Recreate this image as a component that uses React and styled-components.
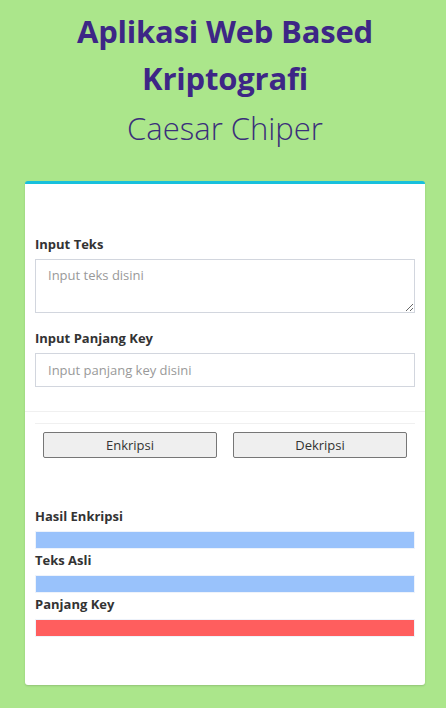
import React from "react";
import styled, { createGlobalStyle } from "styled-components";

const GlobalStyle = createGlobalStyle`
  html, body {
    margin: 0;
    padding: 0;
    background: #abe68b;
  }
  body {
    font-family: "Open Sans", "Noto Sans", sans-serif;
  }
`;

const Page = styled.div`
  width: 446px;
  min-height: 708px;
  background: #abe68b;
  padding: 8px 21px 0 25px;
  box-sizing: border-box;
`;

const Title = styled.h1`
  margin: 0;
  text-align: center;
  font-size: 31px;
  line-height: 47px;
  font-weight: 700;
  color: #3d2686;
  letter-spacing: -0.2px;
`;

const Subtitle = styled.h2`
  margin: 0;
  text-align: center;
  font-size: 31px;
  line-height: 52px;
  font-weight: 300;
  color: #3a2f7a;
`;

const Card = styled.div`
  margin-top: 27px;
  background: #fff;
  border-top: 3px solid #17c0dc;
  border-radius: 3px;
  box-shadow: 0 1px 2px rgba(0, 0, 0, 0.15);
  padding-bottom: 46px;
`;

const Body = styled.div`
  padding: 51px 10px 24px;
  border-bottom: 1px solid #f0f0f0;
`;

const Label = styled.label`
  display: block;
  font-size: 13px;
  line-height: 18px;
  font-weight: 700;
  color: #333;
  margin: ${(p) => p.$top || 0}px 0 6px;
`;

const TextArea = styled.textarea`
  display: block;
  width: 100%;
  height: 54px;
  box-sizing: border-box;
  border: 1px solid #d2d6de;
  padding: 6px 12px;
  font-family: inherit;
  font-size: 13px;
  resize: vertical;
  outline: none;
  &::placeholder {
    color: #999;
  }
`;

const Input = styled.input`
  display: block;
  width: 100%;
  height: 34px;
  box-sizing: border-box;
  border: 1px solid #d2d6de;
  padding: 6px 12px;
  font-family: inherit;
  font-size: 13px;
  outline: none;
  &::placeholder {
    color: #999;
  }
`;

const Footer = styled.div`
  margin: 11px 10px 0;
  border-top: 1px solid #f0f0f0;
  padding: 8px 8px 0;
  display: grid;
  grid-template-columns: 1fr 1fr;
  gap: 16px;
`;

const Button = styled.button`
  height: 26px;
  background: #efefef;
  border: 1px solid #767676;
  border-radius: 2px;
  font-family: inherit;
  font-size: 13px;
  color: #333;
  padding: 0;
`;

const Results = styled.div`
  padding: 49px 10px 0;
`;

const Bar = styled.div`
  height: 16px;
  background: ${(p) => p.$color};
  border: 1px solid #eef3fb;
  margin-bottom: 2px;
`;

export default function App() {
  return (
    <>
      <GlobalStyle />
      <Page>
        <Title>
          Aplikasi Web Based
          <br />
          Kriptografi
        </Title>
        <Subtitle>Caesar Chiper</Subtitle>
        <Card>
          <Body>
            <Label>Input Teks</Label>
            <TextArea placeholder="Input teks disini" />
            <Label $top={16}>Input Panjang Key</Label>
            <Input placeholder="Input panjang key disini" />
          </Body>
          <Footer>
            <Button>Enkripsi</Button>
            <Button>Dekripsi</Button>
          </Footer>
          <Results>
            <Label>Hasil Enkripsi</Label>
            <Bar $color="#99c2fb" />
            <Label>Teks Asli</Label>
            <Bar $color="#99c2fb" />
            <Label>Panjang Key</Label>
            <Bar $color="#ff5e5e" />
          </Results>
        </Card>
      </Page>
    </>
  );
}
